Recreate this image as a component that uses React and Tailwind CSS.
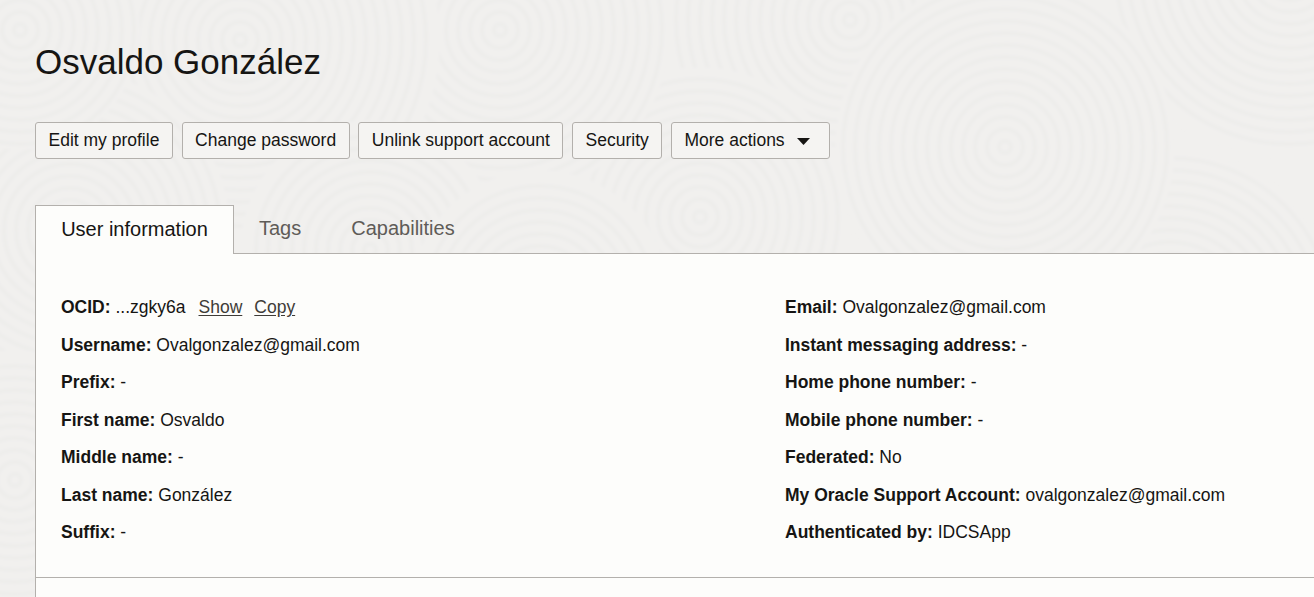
const arcs = [
  [1290, -30, 190], [1170, 320, 170], [850, 20, 190], [1005, 147, 170], [700, 217, 150],
  [500, 30, 170], [240, 40, 200], [370, 250, 130], [70, 230, 160], [20, 30, 120], [540, 300, 130], [15, 480, 130],
];

function Pattern() {
  return (
    <svg className="absolute inset-0" width="1314" height="597" viewBox="0 0 1314 597" fill="none" aria-hidden="true">
      <defs>
        <filter id="soft"><feGaussianBlur stdDeviation="1.2" /></filter>
      </defs>
      <g filter="url(#soft)">
        {arcs.map(([cx, cy, max], i) => (
          <g key={i}>
            <circle cx={cx} cy={cy} r={max} fill="#f1f0ee" />
            <g stroke="#eeedeb" strokeWidth="4">
              {Array.from({ length: Math.floor(max / 12) }, (_, k) => (
                <circle key={k} cx={cx} cy={cy} r={6 + k * 12} />
              ))}
            </g>
          </g>
        ))}
      </g>
    </svg>
  );
}

function Btn({ children, caret }) {
  return (
    <button className="flex h-[37px] items-center rounded-[3px] border border-[#b3b0ac] bg-[#f5f4f2] px-[12.5px] text-[17.5px] leading-none text-[#161513]">
      {children}
      {caret && (
        <svg className="ml-[12px] mr-[7px] mt-[2px]" width="13" height="7" viewBox="0 0 13 7">
          <path d="M0 0h13L6.5 7z" fill="#161513" />
        </svg>
      )}
    </button>
  );
}

function Row({ label, value, children }) {
  return (
    <div className="flex h-[37.5px] items-center whitespace-pre pt-px text-[17.5px] text-[#161513]">
      <span className="font-bold">{label}: </span>
      <span>{value}</span>
      {children}
    </div>
  );
}

const left = [
  ["Username", "Ovalgonzalez@gmail.com"],
  ["Prefix", "-"],
  ["First name", "Osvaldo"],
  ["Middle name", "-"],
  ["Last name", "González"],
  ["Suffix", "-"],
];
const right = [
  ["Email", "Ovalgonzalez@gmail.com"],
  ["Instant messaging address", "-"],
  ["Home phone number", "-"],
  ["Mobile phone number", "-"],
  ["Federated", "No"],
  ["My Oracle Support Account", "ovalgonzalez@gmail.com"],
  ["Authenticated by", "IDCSApp"],
];

export default function App() {
  return (
    <div className="relative h-[597px] w-[1314px] overflow-hidden bg-[#f1f0ee] font-['Liberation_Sans',Arial,sans-serif]">
      <Pattern />
      <div className="relative pl-[35px]">
        <h1 className="pt-[41px] text-[35px] leading-[42px] font-normal text-[#161513]">Osvaldo González</h1>
        <div className="mt-[39px] flex gap-[8.7px]">
          <Btn>Edit my profile</Btn>
          <Btn>Change password</Btn>
          <Btn>Unlink support account</Btn>
          <Btn>Security</Btn>
          <Btn caret>More actions</Btn>
        </div>
        <div className="mt-[46px] flex h-[49px] items-stretch border-b border-[#b3b0ac] text-[20px]">
          <div className="-mb-px flex w-[199px] items-center justify-center border border-b-0 border-[#b3b0ac] bg-[#fdfdfb] pb-[2px] text-[#161513]">
            User information
          </div>
          <div className="flex items-center pb-[3px] pl-[25px] text-[#5f5c58]">Tags</div>
          <div className="flex items-center pb-[3px] pl-[50px] text-[#5f5c58]">Capabilities</div>
        </div>
        <div className="h-[344px] border-l border-[#b3b0ac] bg-[#fdfdfb]">
          <div className="flex h-[324px] border-b border-[#b3b0ac] pl-[25px] pt-[34px]">
            <div className="w-[724px] shrink-0">
              <Row label="OCID" value="...zgky6a">
                <a className="ml-[13px] text-[#3f3c38] underline underline-offset-2">Show</a>
                <a className="ml-[12px] text-[#3f3c38] underline underline-offset-2">Copy</a>
              </Row>
              {left.map(([l, v]) => (
                <Row key={l} label={l} value={v} />
              ))}
            </div>
            <div>
              {right.map(([l, v]) => (
                <Row key={l} label={l} value={v} />
              ))}
            </div>
          </div>
        </div>
      </div>
    </div>
  );
}
